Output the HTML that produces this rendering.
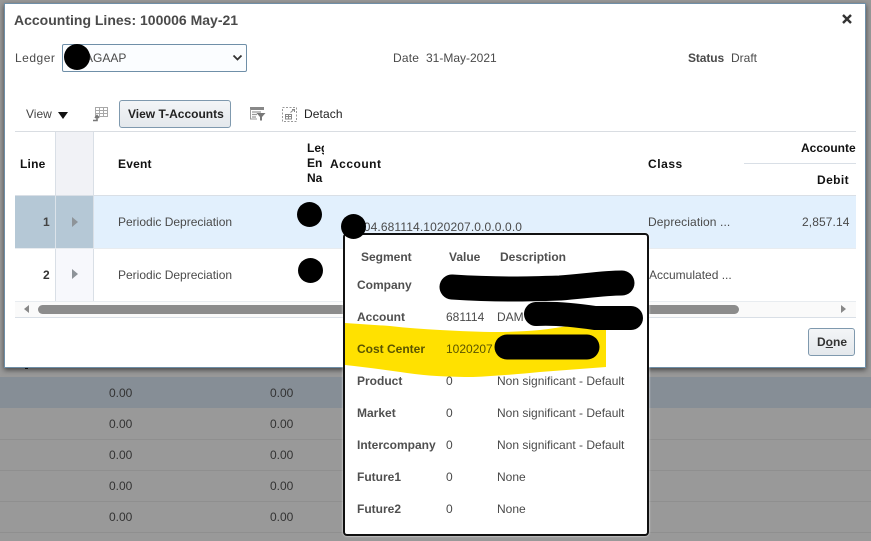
<!DOCTYPE html>
<html><head><meta charset="utf-8">
<style>
html,body{margin:0;padding:0}
body{width:871px;height:541px;overflow:hidden;position:relative;background:#999;font-family:"Liberation Sans",sans-serif;font-size:12px;color:#4a4a4a}
.a{position:absolute;white-space:nowrap;line-height:14px}
.b{font-weight:bold}
.k{color:#111;font-weight:bold}
.r{position:absolute;background:#8f8f8f}
.s{color:#4f4f4f;font-weight:bold}
.o{position:absolute;background:#000;border-radius:50%}
</style></head><body>

<!-- background grid -->
<div class="a" style="left:436px;top:-11px;color:#222;font-size:12px">Reclassified</div>
<div class="a" style="left:545px;top:-11px;color:#222;font-size:12px">OOPENLOOPEN</div>
<div class="r" style="left:0;top:377px;width:871px;height:31px;background:#868e96"></div>
<div class="r" style="left:0;top:439px;width:871px;height:1px"></div>
<div class="r" style="left:0;top:470px;width:871px;height:1px"></div>
<div class="r" style="left:0;top:501px;width:871px;height:1px"></div>
<div class="r" style="left:0;top:532px;width:871px;height:1px"></div>
<div class="a" style="left:109px;top:386px;color:#333">0.00</div><div class="a" style="left:270px;top:386px;color:#333">0.00</div>
<div class="a" style="left:109px;top:417px;color:#333">0.00</div><div class="a" style="left:270px;top:417px;color:#333">0.00</div>
<div class="a" style="left:109px;top:448px;color:#333">0.00</div><div class="a" style="left:270px;top:448px;color:#333">0.00</div>
<div class="a" style="left:109px;top:479px;color:#333">0.00</div><div class="a" style="left:270px;top:479px;color:#333">0.00</div>
<div class="a" style="left:109px;top:510px;color:#333">0.00</div><div class="a" style="left:270px;top:510px;color:#333">0.00</div>
<div class="r" style="left:25px;top:367px;width:3px;height:2px;background:#111"></div>

<!-- dialog -->
<div style="position:absolute;left:4px;top:3px;width:860px;height:363px;background:#fff;border:1px solid #6f8fa8;box-shadow:0 2px 5px rgba(0,0,0,.55)"></div>

<div class="a b" style="left:14px;top:12px;font-size:14px;line-height:16px;color:#4a4a4a">Accounting Lines: 100006 May-21</div>
<svg style="position:absolute;left:841px;top:13px" width="12" height="12" viewBox="0 0 12 12"><path d="M2 2L10 10M10 2L2 10" stroke="#333" stroke-width="2.4"/></svg>

<div class="a" style="left:15px;top:51px;color:#4a4a4a;letter-spacing:.5px">Ledger</div>
<div style="position:absolute;left:62px;top:44px;width:183px;height:26px;border:1px solid #6f8fa8;border-radius:2px;background:#fbfdff"></div>
<div class="a" style="left:85px;top:51px;color:#4a4a4a">AGAAP</div>
<svg style="position:absolute;left:232px;top:54px" width="11" height="8" viewBox="0 0 11 8"><path d="M1.5 1.5L5.5 5.5L9.5 1.5" fill="none" stroke="#333" stroke-width="1.8"/></svg>
<div class="o" style="left:64px;top:44px;width:26px;height:26px"></div>

<div class="a" style="left:393px;top:51px;letter-spacing:.2px">Date</div>
<div class="a" style="left:426px;top:51px;letter-spacing:0">31-May-2021</div>
<div class="a b" style="left:688px;top:51px;color:#4a4a4a;letter-spacing:-.1px">Status</div>
<div class="a" style="left:731px;top:51px">Draft</div>

<!-- toolbar -->
<div class="a" style="left:26px;top:107px;color:#444">View</div>
<div style="position:absolute;left:58px;top:112px;width:0;height:0;border-left:5px solid transparent;border-right:5px solid transparent;border-top:7px solid #111"></div>
<svg style="position:absolute;left:92px;top:106px" width="18" height="18" viewBox="0 0 18 18" fill="none" stroke="#a8a8a8"><rect x="3.5" y="1.5" width="12" height="9"/><path d="M3.5 4.5H15.5M3.5 7.5H15.5M7.5 1.5V10.5M11.5 1.5V10.5"/><path d="M1 14.5H5V10.5M3 12L5 9.5L7 12" stroke="#777" stroke-width="1.6"/></svg>
<div style="position:absolute;left:119px;top:100px;width:110px;height:26px;border:1px solid #7f99ae;border-radius:3px;background:linear-gradient(#f3f5f7,#e4e8ec)"></div>
<div class="a b" style="left:128px;top:107px;color:#222">View T-Accounts</div>
<svg style="position:absolute;left:249px;top:105px" width="18" height="18" viewBox="0 0 18 18"><path d="M1.5 2.5H14.5V4.5H1.5Z" fill="#888" stroke="#888"/><path d="M1.5 4V14H8" fill="none" stroke="#999" stroke-width="1"/><path d="M3 7H12M3 9.5H8M3 12H7" stroke="#999" stroke-width="1.2"/><path d="M7.5 8H16.5L13 12V15.5H11V12Z" fill="#777"/></svg>
<svg style="position:absolute;left:281px;top:105px" width="17" height="18" viewBox="0 0 17 18" fill="none" stroke="#999"><rect x="1.5" y="2.5" width="14" height="14" stroke-dasharray="2 1.5"/><path d="M9.5 7.5L13 4.5M11 4.5H13.5V7" stroke="#888"/><rect x="4.5" y="9.5" width="6" height="4.5" stroke="#888"/><path d="M4.5 11.5H10.5M7.5 9.5V14" stroke="#888"/></svg>
<div class="a" style="left:304px;top:107px;color:#222;letter-spacing:.1px">Detach</div>

<!-- table -->
<div class="r" style="left:15px;top:131px;width:841px;height:1px;background:#d9dde2"></div>
<div class="r" style="left:55px;top:132px;width:38px;height:63px;background:#f1f2f6"></div>
<div class="r" style="left:55px;top:132px;width:1px;height:169px;background:#d9dfe6"></div>
<div class="r" style="left:93px;top:132px;width:1px;height:169px;background:#d9dfe6"></div>
<div class="r" style="left:15px;top:195px;width:841px;height:1px;background:#d9dfe6"></div>

<div class="a k" style="left:20px;top:157px;letter-spacing:.2px">Line</div>
<div class="a k" style="left:118px;top:157px;letter-spacing:.2px">Event</div>
<div style="position:absolute;left:307px;top:141px;width:17px;height:45px;overflow:hidden;line-height:15px;font-weight:bold;color:#111">Legal<br>En<br>Na</div>
<div class="a k" style="left:330px;top:157px;letter-spacing:.5px">Account</div>
<div class="a k" style="left:648px;top:157px;letter-spacing:.55px">Class</div>
<div style="position:absolute;left:801px;top:141px;width:55px;height:14px;overflow:hidden;line-height:14px;font-weight:bold;color:#111;white-space:nowrap">Accounted</div>
<div class="r" style="left:744px;top:163px;width:112px;height:1px;background:#d9dfe6"></div>
<div class="a k" style="left:817px;top:173px;letter-spacing:.4px">Debit</div>

<!-- row1 -->
<div class="r" style="left:94px;top:196px;width:762px;height:52px;background:#e2f0fd"></div>
<div class="r" style="left:15px;top:196px;width:78px;height:52px;background:#b5c8d6"></div>
<div class="r" style="left:55px;top:196px;width:1px;height:52px;background:#dbe3ea"></div>
<div class="a b" style="left:43px;top:215px;color:#444">1</div>
<div style="position:absolute;left:72px;top:217px;width:0;height:0;border-top:5px solid transparent;border-bottom:5px solid transparent;border-left:6px solid #8e9499"></div>
<div class="a" style="left:118px;top:215px;letter-spacing:0">Periodic Depreciation</div>
<div class="a" style="left:357px;top:220px;letter-spacing:.12px">104.681114.1020207.0.0.0.0.0</div>
<div class="a" style="left:648px;top:215px;letter-spacing:.1px">Depreciation ...</div>
<div class="a" style="left:802px;top:215px;letter-spacing:.1px">2,857.14</div>

<!-- row2 -->
<div class="r" style="left:15px;top:248px;width:841px;height:1px;background:#e8ecf0"></div>
<div class="r" style="left:56px;top:249px;width:37px;height:52px;background:#f7f8fc"></div>
<div class="a b" style="left:43px;top:268px;color:#333">2</div>
<div style="position:absolute;left:72px;top:269px;width:0;height:0;border-top:5px solid transparent;border-bottom:5px solid transparent;border-left:6px solid #8e9499"></div>
<div class="a" style="left:118px;top:268px;letter-spacing:0">Periodic Depreciation</div>
<div class="a" style="left:649px;top:268px;letter-spacing:0">Accumulated ...</div>

<!-- scrollbar -->
<div class="r" style="left:15px;top:301px;width:841px;height:1px;background:#e8ecf0"></div>
<div class="r" style="left:15px;top:302px;width:841px;height:15px;background:#fafafa"></div>
<div class="r" style="left:15px;top:317px;width:841px;height:1px;background:#d9dfe6"></div>
<div style="position:absolute;left:24px;top:305px;width:0;height:0;border-top:4px solid transparent;border-bottom:4px solid transparent;border-right:5px solid #888"></div>
<div class="r" style="left:38px;top:305px;width:701px;height:9px;background:#8c8c8c;border-radius:5px"></div>
<div style="position:absolute;left:841px;top:305px;width:0;height:0;border-top:4px solid transparent;border-bottom:4px solid transparent;border-left:5px solid #888"></div>

<!-- done -->
<div style="position:absolute;left:808px;top:328px;width:45px;height:26px;border:1px solid #7f99ae;border-radius:3px;background:linear-gradient(#f3f5f7,#e4e8ec)"></div>
<div class="a b" style="left:817px;top:335px;color:#333">D<u>o</u>ne</div>

<!-- redaction dots behind popup -->
<div class="o" style="left:297px;top:202px;width:25px;height:25px"></div>
<div class="o" style="left:298px;top:258px;width:25px;height:25px"></div>

<!-- popup -->
<div style="position:absolute;left:343px;top:233px;width:302px;height:299px;background:#fff;border:2px solid #111;border-radius:4px;box-shadow:0 0 2px rgba(255,255,255,.9)"></div>
<div class="o" style="left:341px;top:214px;width:25px;height:25px"></div>

<!-- yellow highlight -->
<svg style="position:absolute;left:345px;top:322px" width="262" height="58" viewBox="0 0 262 58"><path d="M0 1C15 2 30 3 45 4C62 6 78 7 95 8C115 9 135 10 152 10C168 10 182 9 195 8C205 7 215 5 225 4L261 7V45L195 50C175 52 150 54 128 55C105 55 82 54 62 51C40 48 20 45 0 43Z" fill="#ffe100"/></svg>

<div class="a s" style="left:361px;top:250px">Segment</div>
<div class="a s" style="left:449px;top:250px">Value</div>
<div class="a s" style="left:500px;top:250px">Description</div>

<div class="a s" style="left:357px;top:278px">Company</div>
<div class="a s" style="left:357px;top:310px">Account</div>
<div class="a" style="left:446px;top:310px">681114</div>
<div class="a" style="left:497px;top:310px">DAM</div>
<div class="a s" style="left:357px;top:342px;color:#5a5400">Cost Center</div>
<div class="a" style="left:446px;top:342px;color:#5a5400">1020207</div>
<div class="a s" style="left:357px;top:374px">Product</div>
<div class="a" style="left:446px;top:374px">0</div>
<div class="a" style="left:497px;top:374px">Non significant - Default</div>
<div class="a s" style="left:357px;top:406px">Market</div>
<div class="a" style="left:446px;top:406px">0</div>
<div class="a" style="left:497px;top:406px">Non significant - Default</div>
<div class="a s" style="left:357px;top:438px">Intercompany</div>
<div class="a" style="left:446px;top:438px">0</div>
<div class="a" style="left:497px;top:438px">Non significant - Default</div>
<div class="a s" style="left:357px;top:470px">Future1</div>
<div class="a" style="left:446px;top:470px">0</div>
<div class="a" style="left:497px;top:470px">None</div>
<div class="a s" style="left:357px;top:502px">Future2</div>
<div class="a" style="left:446px;top:502px">0</div>
<div class="a" style="left:497px;top:502px">None</div>

<!-- black scribbles -->
<svg style="position:absolute;left:430px;top:265px" width="225" height="105" viewBox="0 0 225 105" fill="none" stroke="#000" stroke-linecap="round">
<path d="M22 22C70 25 100 24 130 23C155 21 175 18 192 18" stroke-width="25"/>
<path d="M106 49C125 48 145 50 165 53L201 53" stroke-width="24"/>
<path d="M77 82H157" stroke-width="25"/>
</svg>
</body></html>
